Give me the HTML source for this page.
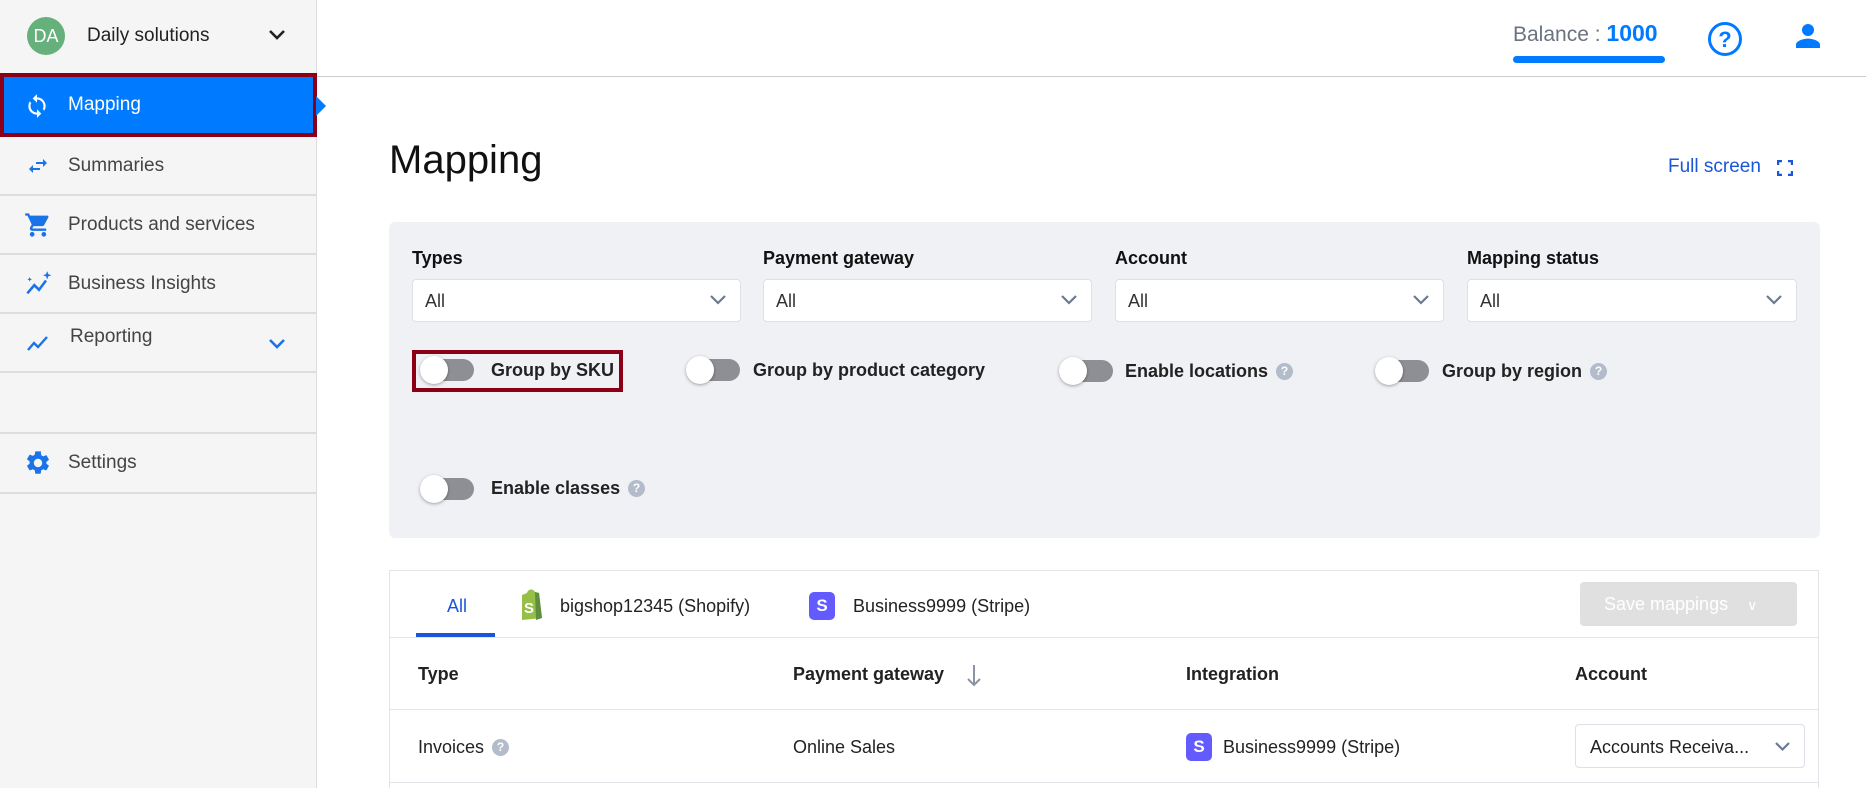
<!DOCTYPE html>
<html><head><meta charset="utf-8"><style>
*{box-sizing:border-box;margin:0;padding:0}
body{width:1866px;height:788px;overflow:hidden;font-family:"Liberation Sans",sans-serif;background:#fff;position:relative;color:#222}
.a{position:absolute}
#sb{left:0;top:0;width:317px;height:788px;background:#f5f5f5;border-right:1px solid #ddd}
.item{position:absolute;left:0;width:316px;height:59px;border-bottom:2px solid #ddd;font-size:19px;color:#444}
.item span{position:absolute;left:68px;top:50%;transform:translateY(-50%)}
.item svg{position:absolute;left:24px;top:50%;transform:translateY(-50%)}
.lbl{font-weight:bold;font-size:18px;color:#111;top:248px}
.sel{top:279px;width:329px;height:43px;background:#fff;border:1px solid #dde0e6;border-radius:4px;font-size:18px;color:#333;padding:11px 12px}
.sel svg{position:absolute;right:14px;top:15px}
.tg{width:50px;height:22px;background:#8e8f94;border-radius:11px}
.tg::after{content:"";position:absolute;left:-4px;top:-3px;width:28px;height:28px;border-radius:50%;background:#fff;box-shadow:0 1px 3px rgba(0,0,0,.35)}
.tt{font-weight:bold;font-size:18px;color:#222}
.q{display:inline-block;width:17px;height:17px;border-radius:50%;background:#b3bccb;color:#fff;font-size:12px;text-align:center;line-height:17px;font-weight:bold;vertical-align:2px;margin-left:8px}
.th{font-weight:bold;font-size:18px;top:664px;color:#222}
.td{font-size:18px;top:737px;color:#222}
</style></head><body>
<div id="sb" class="a">
  <div class="a" style="left:27px;top:17px;width:38px;height:38px;border-radius:50%;background:#66b07c;color:#fff;font-size:18px;text-align:center;line-height:38px">DA</div>
  <div class="a" style="left:87px;top:25px;font-size:19px;color:#222">Daily solutions</div>
  <svg class="a" style="left:268px;top:29px" width="18" height="12" viewBox="0 0 18 12"><path d="M2 2l7 7 7-7" fill="none" stroke="#222" stroke-width="2.6"/></svg>
  <div class="a" style="left:0;top:73px;width:317px;height:64px;background:#007bff;border:4px solid #8b0016"></div>
  <svg class="a" style="left:316px;top:96px" width="12" height="20"><path d="M0 0l10 10-10 10z" fill="#007bff"/></svg>
  <svg class="a" style="left:24px;top:92px" width="26" height="28" viewBox="0 0 24 24"><path d="M12 4V1L8 5l4 4V6c3.3 0 6 2.7 6 6 0 1-.25 2-.7 2.8l1.46 1.46A7.9 7.9 0 0020 12c0-4.4-3.6-8-8-8zm0 14c-3.3 0-6-2.7-6-6 0-1 .25-2 .7-2.8L5.24 7.74A7.9 7.9 0 004 12c0 4.4 3.6 8 8 8v3l4-4-4-4v3z" fill="#fff"/></svg>
  <div class="a" style="left:68px;top:94px;font-size:19px;color:#fff">Mapping</div>
  <div class="item" style="top:137px"><svg width="28" height="24" viewBox="0 0 24 24"><path d="M6.99 11L3 15l3.99 4v-3H14v-2H6.99v-3zM21 9l-3.99-4v3H10v2h7.01v3L21 9z" fill="#1a73e8"/></svg><span>Summaries</span></div>
  <div class="item" style="top:196px"><svg width="28" height="28" viewBox="0 0 24 24"><path d="M7 18c-1.1 0-2 .9-2 2s.9 2 2 2 2-.9 2-2-.9-2-2-2zM1 2v2h2l3.6 7.59-1.35 2.45c-.16.28-.25.61-.25.96 0 1.1.9 2 2 2h12v-2H7.42c-.14 0-.25-.11-.25-.25l.03-.12.9-1.63h7.45c.75 0 1.41-.41 1.750-1.03l3.58-6.49A1 1 0 0020 4H5.21l-.94-2H1zm16 16c-1.1 0-2 .9-2 2s.9 2 2 2 2-.9 2-2-.9-2-2-2z" fill="#1a73e8"/></svg><span>Products and services</span></div>
  <div class="item" style="top:255px"><svg width="30" height="28" viewBox="0 0 24 24"><path d="M2 20l6-7 4 4 6-8" fill="none" stroke="#1a73e8" stroke-width="2.2"/><path d="M19 1l1 2.5 2.5 1-2.5 1-1 2.5-1-2.5-2.5-1 2.5-1zM4 6l.6 1.4L6 8l-1.4.6L4 10l-.6-1.4L2 8l1.4-.6z" fill="#1a73e8"/></svg><span>Business Insights</span></div>
  <div class="item" style="top:314px"><svg width="28" height="24" viewBox="0 0 24 24"><path d="M2 19l6-7 4 4 9-10" fill="none" stroke="#1a73e8" stroke-width="2.4"/></svg><span style="left:70px;top:40%">Reporting</span>
    <svg style="left:268px;top:52%" width="18" height="12" viewBox="0 0 18 12"><path d="M2 2l7 7 7-7" fill="none" stroke="#1a73e8" stroke-width="2.6"/></svg></div>
  <div class="item" style="top:373px;height:61px"></div>
  <div class="item" style="top:434px;height:60px"><svg width="28" height="28" viewBox="0 0 24 24"><path d="M19.14 12.94a7.1 7.1 0 000-1.88l2.03-1.58a.5.5 0 00.12-.61l-1.92-3.32a.5.5 0 00-.59-.22l-2.39.96a7 7 0 00-1.620-.94l-.36-2.54A.48.48 0 0013.9 2h-3.84a.48.48 0 00-.48.41l-.36 2.54c-.59.24-1.13.56-1.62.94l-2.39-.96a.5.5 0 00-.59.22L2.7 8.47a.5.5 0 00.12.61l2.03 1.58a7.1 7.1 0 000 1.88l-2.03 1.58a.5.5 0 00-.12.61l1.92 3.32c.12.22.37.29.59.22l2.39-.96c.5.38 1.03.7 1.62.94l.36 2.54c.05.24.24.41.48.41h3.84c.24 0 .44-.17.47-.41l.36-2.54c.59-.24 1.130-.56 1.62-.94l2.39.96c.22.08.47 0 .59-.22l1.92-3.32a.5.5 0 00-.12-.61l-2.01-1.58zM12 15.6A3.6 3.6 0 1112 8.4a3.6 3.6 0 010 7.2z" fill="#1a73e8"/></svg><span>Settings</span></div>
</div>
<div class="a" style="left:317px;top:76px;width:1549px;height:1px;background:#ccc"></div>
<div class="a" style="left:1513px;top:20px;font-size:21px;color:#6b7280">Balance : <b style="color:#007bff;font-size:23px;font-weight:600">1000</b></div>
<div class="a" style="left:1513px;top:56px;width:152px;height:7px;border-radius:4px;background:#007bff"></div>
<svg class="a" style="left:1706px;top:20px" width="38" height="38" viewBox="0 0 38 38"><circle cx="19" cy="19" r="15.5" fill="none" stroke="#007bff" stroke-width="3"/><text x="19" y="27" text-anchor="middle" font-family="Liberation Sans" font-weight="bold" font-size="22" fill="#007bff">?</text></svg>
<svg class="a" style="left:1792px;top:20px" width="32" height="32" viewBox="0 0 24 24"><path d="M12 12a4.5 4.5 0 100-9 4.5 4.5 0 000 9zm0 2c-3 0-9 1.5-9 4.5V21h18v-2.5c0-3-6-4.5-9-4.5z" fill="#007bff"/></svg>
<div class="a" style="left:389px;top:138px;font-size:40px;color:#111">Mapping</div>
<div class="a" style="left:1668px;top:156px;font-size:19px;color:#1a56db">Full screen</div>
<svg class="a" style="left:1777px;top:160px" width="16" height="16" viewBox="0 0 16 16"><path d="M1 5V1h4M11 1h4v4M15 11v4h-4M5 15H1v-4" fill="none" stroke="#1a56db" stroke-width="2.4"/></svg>
<div class="a" style="left:389px;top:222px;width:1431px;height:316px;background:#f0f1f5;border-radius:6px"></div>
<div class="a lbl" style="left:412px">Types</div>
<div class="a lbl" style="left:763px">Payment gateway</div>
<div class="a lbl" style="left:1115px">Account</div>
<div class="a lbl" style="left:1467px">Mapping status</div>
<div class="a sel" style="left:412px">All<svg width="16" height="10"><path d="M1 1l7 7 7-7" fill="none" stroke="#6b7a90" stroke-width="2.2"/></svg></div>
<div class="a sel" style="left:763px">All<svg width="16" height="10"><path d="M1 1l7 7 7-7" fill="none" stroke="#6b7a90" stroke-width="2.2"/></svg></div>
<div class="a sel" style="left:1115px">All<svg width="16" height="10"><path d="M1 1l7 7 7-7" fill="none" stroke="#6b7a90" stroke-width="2.2"/></svg></div>
<div class="a sel" style="left:1467px;width:330px">All<svg width="16" height="10"><path d="M1 1l7 7 7-7" fill="none" stroke="#6b7a90" stroke-width="2.2"/></svg></div>
<div class="a" style="left:412px;top:350px;width:211px;height:42px;border:4px solid #8b0016"></div>
<div class="a tg" style="left:424px;top:359px"></div><div class="a tt" style="left:491px;top:360px">Group by SKU</div>
<div class="a tg" style="left:690px;top:359px"></div><div class="a tt" style="left:753px;top:360px">Group by product category</div>
<div class="a tg" style="left:1063px;top:360px"></div><div class="a tt" style="left:1125px;top:361px">Enable locations<span class="q">?</span></div>
<div class="a tg" style="left:1379px;top:360px"></div><div class="a tt" style="left:1442px;top:361px">Group by region<span class="q">?</span></div>
<div class="a tg" style="left:424px;top:478px"></div><div class="a tt" style="left:491px;top:478px">Enable classes<span class="q">?</span></div>
<div class="a" style="left:389px;top:570px;width:1430px;height:218px;border:1px solid #e3e5ea;border-bottom:none"></div>
<div class="a" style="left:447px;top:596px;font-size:18px;color:#1a56db">All</div>
<div class="a" style="left:416px;top:633px;width:79px;height:4px;background:#1a56db"></div>
<svg class="a" style="left:518px;top:588px" width="26" height="32" viewBox="0 0 26 32"><path d="M4 7l5-2c1-4 6-5 8-1l4 1 3 25-20 2z" fill="#95bf47"/><path d="M17 4l4 1 3 25-6 2z" fill="#5e8e3e"/><text x="11" y="25" text-anchor="middle" font-family="Liberation Sans" font-weight="bold" font-size="15" fill="#fff">S</text></svg>
<div class="a" style="left:560px;top:596px;font-size:18px">bigshop12345 (Shopify)</div>
<div class="a" style="left:809px;top:592px;width:26px;height:28px;border-radius:5px;background:#635bff;color:#fff;font-weight:bold;font-size:17px;text-align:center;line-height:28px">S</div>
<div class="a" style="left:853px;top:596px;font-size:18px">Business9999 (Stripe)</div>
<div class="a" style="left:1580px;top:582px;width:217px;height:44px;border-radius:4px;background:#e0e0e0;color:#fff;font-size:18px;padding:12px 0 0 24px">Save mappings <span style="margin-left:14px;font-size:14px">&#8744;</span></div>
<div class="a" style="left:389px;top:637px;width:1430px;height:1px;background:#e3e5ea"></div>
<div class="a th" style="left:418px">Type</div>
<div class="a th" style="left:793px">Payment gateway</div>
<svg class="a" style="left:966px;top:664px" width="16" height="24" viewBox="0 0 16 24"><path d="M8 1v20M2 15l6 6 6-6" fill="none" stroke="#8a93a3" stroke-width="2"/></svg>
<div class="a th" style="left:1186px">Integration</div>
<div class="a th" style="left:1575px">Account</div>
<div class="a" style="left:389px;top:709px;width:1430px;height:1px;background:#e3e5ea"></div>
<div class="a td" style="left:418px">Invoices<span class="q">?</span></div>
<div class="a td" style="left:793px">Online Sales</div>
<div class="a" style="left:1186px;top:733px;width:26px;height:28px;border-radius:5px;background:#635bff;color:#fff;font-weight:bold;font-size:17px;text-align:center;line-height:28px">S</div>
<div class="a td" style="left:1223px">Business9999 (Stripe)</div>
<div class="a" style="left:1575px;top:724px;width:230px;height:44px;border:1px solid #dde0e6;border-radius:4px;font-size:18px;padding:12px 0 0 14px;color:#222">Accounts Receiva...<svg style="position:absolute;right:14px;top:17px" width="15" height="10"><path d="M1 1l6.5 6.5L14 1" fill="none" stroke="#6b7a90" stroke-width="2.2"/></svg></div>
<div class="a" style="left:389px;top:782px;width:1430px;height:1px;background:#e3e5ea"></div>
</body></html>
